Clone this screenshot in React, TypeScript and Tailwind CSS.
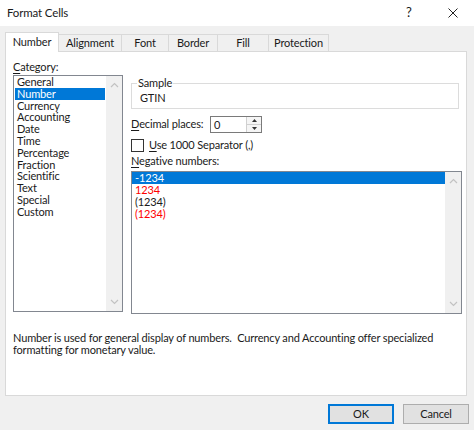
import React from 'react'

const font = { fontFamily: '"Segoe UI", Lato, "Noto Sans", sans-serif' }

const tabs = [
  { label: 'Number', w: 'w-[54px]' },
  { label: 'Alignment', w: 'w-[63px]' },
  { label: 'Font', w: 'w-[47px]' },
  { label: 'Border', w: 'w-[49px]' },
  { label: 'Fill', w: 'w-[51px]' },
  { label: 'Protection', w: 'w-[60px]' },
]

const categories = [
  'General',
  'Number',
  'Currency',
  'Accounting',
  'Date',
  'Time',
  'Percentage',
  'Fraction',
  'Scientific',
  'Text',
  'Special',
  'Custom',
]

function Chevron({ up }: { up?: boolean }) {
  return (
    <svg width="9" height="6" viewBox="0 0 9 6" className="block">
      <path
        d={up ? 'M1 5 L4.5 1.5 L8 5' : 'M1 1 L4.5 4.5 L8 1'}
        fill="none"
        stroke="#c2c2c2"
        strokeWidth="1.2"
      />
    </svg>
  )
}

function ScrollTrack() {
  return (
    <div className="flex w-[16px] flex-col items-center justify-between bg-[#f0f0f0] py-[6px]">
      <Chevron up />
      <Chevron />
    </div>
  )
}

export default function App() {
  return (
    <div
      className="flex h-[430px] w-[474px] flex-col overflow-hidden whitespace-nowrap bg-[#f0f0f0] text-[11px] tracking-[-0.15px] text-[#1a1a1a]"
      style={font}
    >
      {/* Title bar */}
      <div className="flex h-[26px] items-center bg-white pl-[7px] text-[11.5px]">
        <span className="flex-1">Format Cells</span>
        <span className="w-[12px] text-[13px]">?</span>
        <svg width="10" height="10" viewBox="0 0 10 10" className="ml-[30px] mr-[16px]">
          <path d="M0.5 0.5 L9.5 9.5 M9.5 0.5 L0.5 9.5" stroke="#222" strokeWidth="1" />
        </svg>
      </div>

      {/* Tabs */}
      <div className="mt-[6px] flex h-[19px] items-end pl-[5px]">
        {tabs.map((t, i) =>
          i === 0 ? (
            <div
              key={t.label}
              className={`${t.w} relative z-10 flex h-[20px] translate-y-[1px] items-center justify-center border border-b-0 border-[#d9d9d9] bg-white`}
            >
              {t.label}
            </div>
          ) : (
            <div
              key={t.label}
              className={`${t.w} flex h-[17px] items-center justify-center border border-b-0 border-l-0 border-[#d9d9d9] bg-[#f0f0f0]`}
            >
              {t.label}
            </div>
          )
        )}
      </div>

      {/* Panel */}
      <div className="ml-[5px] flex h-[345px] w-[462px] flex-col border border-[#d9d9d9] bg-white">
        <div className="flex pl-[7px]">
          {/* Category column */}
          <div className="flex w-[110px] flex-col">
            <div className="mt-[7px] h-[16px] leading-[16px]">
              <span className="underline underline-offset-2">C</span>ategory:
            </div>
            <div className="flex h-[237px] border border-[#828790]">
              <div className="flex-1 px-[1px]">
                {categories.map((c, i) => (
                  <div
                    key={c}
                    className={`h-[11.8px] pl-[2px] leading-[11.8px] ${
                      i === 1 ? 'bg-[#0078d7] text-white' : ''
                    }`}
                  >
                    {c}
                  </div>
                ))}
              </div>
              <ScrollTrack />
            </div>
          </div>

          {/* Right column */}
          <div className="ml-[8px] flex w-[331px] flex-col">
            <div className="relative mt-[31px] h-[26px] w-[328px] border border-[#dcdcdc]">
              <span className="absolute -top-[9px] left-[5px] bg-white px-[1px] leading-[16px]">
                Sample
              </span>
              <div className="pl-[8px] pt-[7px] leading-[14px]">GTIN</div>
            </div>

            <div className="mt-[7px] flex h-[17px] items-center">
              <span className="w-[79px]">
                <span className="underline underline-offset-2">D</span>ecimal places:
              </span>
              <div className="flex h-[17px] w-[52px] border border-[#7a7a7a]">
                <span className="flex-1 pl-[3px] leading-[15px]">0</span>
                <div className="flex w-[15px] flex-col border-l border-[#d0d0d0]">
                  <div className="flex flex-1 items-center justify-center border-b border-[#d0d0d0] bg-[#f5f5f5]">
                    <svg width="5" height="3" viewBox="0 0 5 3">
                      <path d="M0 3 L2.5 0 L5 3 Z" fill="#333" />
                    </svg>
                  </div>
                  <div className="flex flex-1 items-center justify-center bg-[#f5f5f5]">
                    <svg width="5" height="3" viewBox="0 0 5 3">
                      <path d="M0 0 L2.5 3 L5 0 Z" fill="#333" />
                    </svg>
                  </div>
                </div>
              </div>
            </div>

            <div className="mt-[6px] flex h-[13px] items-center">
              <div className="h-[13px] w-[13px] border border-[#333]" />
              <span className="ml-[5px]">
                <span className="underline underline-offset-2">U</span>se 1000 Separator (,)
              </span>
            </div>

            <div className="mt-[1px] h-[16px] leading-[16px]">
              <span className="underline underline-offset-2">N</span>egative numbers:
            </div>

            <div className="mt-[2px] flex h-[143px] w-[331px] border border-[#828790]">
              <div className="flex-1">
                <div className="h-[12px] bg-[#0078d7] pl-[3px] leading-[12px] text-white">-1234</div>
                <div className="h-[12px] pl-[3px] leading-[12px] text-[#ff0000]">1234</div>
                <div className="h-[12px] pl-[3px] leading-[12px]">(1234)</div>
                <div className="h-[12px] pl-[3px] leading-[12px] text-[#ff0000]">(1234)</div>
              </div>
              <ScrollTrack />
            </div>
          </div>
        </div>

        <div className="mt-[18px] pl-[7px] leading-[12px]">
          <div>Number is used for general display of numbers.&nbsp; Currency and Accounting offer specialized</div>
          <div>formatting for monetary value.</div>
        </div>
      </div>

      {/* Buttons */}
      <div className="mt-[8px] flex justify-end gap-[9px] pr-[5px]">
        <button className="h-[20px] w-[66px] border-2 border-[#0078d7] bg-[#e1e1e1] leading-[14px]">
          OK
        </button>
        <button className="h-[20px] w-[66px] border border-[#adadad] bg-[#e1e1e1] leading-[16px]">
          Cancel
        </button>
      </div>
    </div>
  )
}
